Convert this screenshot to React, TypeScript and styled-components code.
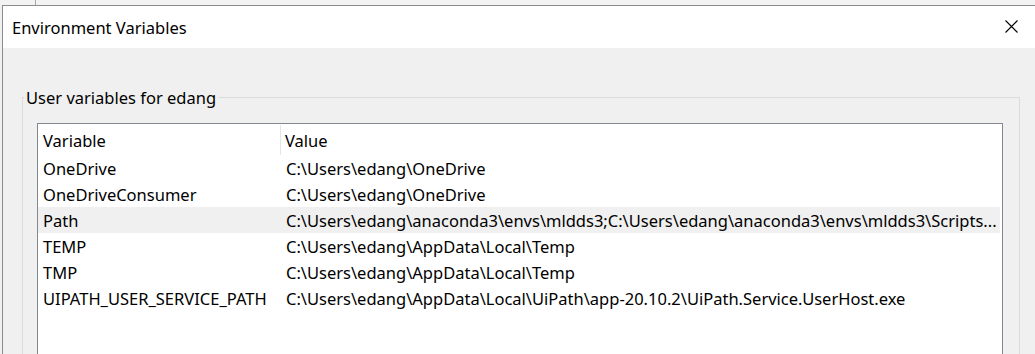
import styled, { createGlobalStyle } from "styled-components";

interface EnvVar {
  name: string;
  value: string;
}

// the Path value is shown the way the list truncates it
const USER_VARS: EnvVar[] = [
  { name: "OneDrive", value: "C:\\Users\\edang\\OneDrive" },
  { name: "OneDriveConsumer", value: "C:\\Users\\edang\\OneDrive" },
  {
    name: "Path",
    value: "C:\\Users\\edang\\anaconda3\\envs\\mldds3;C:\\Users\\edang\\anaconda3\\envs\\mldds3\\Scripts...",
  },
  { name: "TEMP", value: "C:\\Users\\edang\\AppData\\Local\\Temp" },
  { name: "TMP", value: "C:\\Users\\edang\\AppData\\Local\\Temp" },
  {
    name: "UIPATH_USER_SERVICE_PATH",
    value: "C:\\Users\\edang\\AppData\\Local\\UiPath\\app-20.10.2\\UiPath.Service.UserHost.exe",
  },
];

const SELECTED = "Path";

const GlobalStyle = createGlobalStyle`
  html, body {
    margin: 0;
    padding: 0;
    height: 100%;
    overflow: hidden;
    background: #f0f0f0;
  }
  body {
    font-family: "Noto Sans", "Open Sans", sans-serif;
    font-size: 16.5px;
    color: #000;
  }
`;

const App = () => {
  return (
    <>
      <GlobalStyle />
      <Screen>
        <BackWindow>
          <div className="edge"></div>
        </BackWindow>
        <Dialog>
          <TitleBar>
            <div className="title">Environment Variables</div>
            <CloseButton aria-label="Close">
              <svg width="13" height="13" viewBox="0 0 13 13">
                <path d="M0.5 0.5L12.5 12.5M12.5 0.5L0.5 12.5" stroke="#000" strokeWidth="1.1" />
              </svg>
            </CloseButton>
          </TitleBar>
          <Body>
            <GroupBox>
              <legend>User variables for edang</legend>
              <ListBox>
                <HeaderRow>
                  <HeaderCell $divider>Variable</HeaderCell>
                  <HeaderCell>Value</HeaderCell>
                </HeaderRow>
                {USER_VARS.map((v) => (
                  <Row key={v.name} $selected={v.name === SELECTED}>
                    <NameCell>{v.name}</NameCell>
                    <ValueCell>{v.value}</ValueCell>
                  </Row>
                ))}
              </ListBox>
            </GroupBox>
          </Body>
        </Dialog>
      </Screen>
    </>
  );
};

export default App;

const Screen = styled.div`
  width: 1035px;
  height: 354px;
  display: flex;
  flex-direction: column;
  overflow: hidden;
`
const BackWindow = styled.div`
  flex-shrink: 0;
  height: 5px;
  background: #f3f3f3;

  .edge{
    width: 35px;
    height: 100%;
    border-right: 1px solid #a8a8a8;
  }
`
const Dialog = styled.div`
  flex-grow: 1;
  margin-left: 2px;
  border-left: 1px solid #8c8c8c;
  border-top: 1px solid #8c8c8c;
  display: flex;
  flex-direction: column;
`
const TitleBar = styled.div`
  flex-shrink: 0;
  height: 42px;
  background: #fff;
  display: flex;
  align-items: center;
  justify-content: space-between;
  padding: 0 17px 0 9px;

  .title{
    padding-top: 1px;
  }
`
const CloseButton = styled.div`
  width: 13px;
  height: 13px;
  display: flex;
  margin-bottom: 2px;
`
const Body = styled.div`
  flex-grow: 1;
  background: #f0f0f0;
  padding: 38px 15px 0 19px;
`
const GroupBox = styled.fieldset`
  margin: 0;
  padding: 14px 16px 0 14px;
  border: 1px solid #dcdcdc;
  height: 400px;

  legend{
    padding: 0 2px;
    margin-left: -13px;
  }
`
const ListBox = styled.div`
  background: #fff;
  border: 1px solid #828790;
  height: 400px;
  display: flex;
  flex-direction: column;
`
const HeaderRow = styled.div`
  display: grid;
  grid-template-columns: 243px 1fr;
  height: 31px;
  align-items: center;
  flex-shrink: 0;
`
const HeaderCell = styled.div<{ $divider?: boolean }>`
  height: 28px;
  display: flex;
  align-items: center;
  padding-left: ${(p) => (p.$divider ? "5px" : "4px")};
  padding-top: 2px;
  border-right: ${(p) => (p.$divider ? "1px solid #e5e5e5" : "none")};
`
const Row = styled.div<{ $selected?: boolean }>`
  display: grid;
  grid-template-columns: 243px minmax(0, 1fr);
  height: 26px;
  align-items: center;
  margin-right: 2px;
  background: ${(p) => (p.$selected ? "#f0f0f0" : "transparent")};
  flex-shrink: 0;
`
const NameCell = styled.div`
  padding-left: 5px;
  white-space: nowrap;
`
const ValueCell = styled.div`
  padding-left: 5px;
  padding-right: 2px;
  white-space: nowrap;
  overflow: hidden;
  text-overflow: ellipsis;
`
